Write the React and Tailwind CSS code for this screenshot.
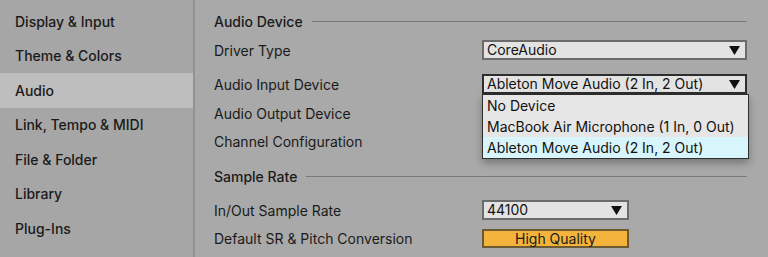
import React from "react";

const font = { fontFamily: "Inter, 'Noto Sans', sans-serif" };

const navItems = [
  "Display & Input",
  "Theme & Colors",
  "Audio",
  "Link, Tempo & MIDI",
  "File & Folder",
  "Library",
  "Plug-Ins",
];

function Arrow() {
  return (
    <svg width="11" height="9" viewBox="0 0 11 9" className="shrink-0">
      <polygon points="0,0 11,0 5.5,9" fill="#111" />
    </svg>
  );
}

function Select({ value, width, focused }) {
  return (
    <div
      className={
        "flex items-center justify-between h-[20px] pl-[3px] pr-[5px] bg-[#e3e3e3] text-[14px] text-[#111] border-2 " +
        (focused ? "border-[#2e2e2e]" : "border-[#6b6b6b]")
      }
      style={{ width }}
    >
      <span className="leading-none">{value}</span>
      <Arrow />
    </div>
  );
}

function Header({ title, h }) {
  return (
    <div className="flex items-center gap-[9px]" style={{ height: h }}>
      <span className="text-[14px] font-medium text-[#1a1a1a]">{title}</span>
      <div className="flex-1 h-px bg-[#7a7a7a]" />
    </div>
  );
}

function Row({ label, h, children }) {
  return (
    <div className="flex items-center" style={{ height: h }}>
      <span className="w-[268px] text-[14px] text-[#1a1a1a]">{label}</span>
      {children}
    </div>
  );
}

export default function App() {
  return (
    <div className="relative w-[768px] h-[257px] flex bg-[#a9a9a9] overflow-hidden" style={font}>
      <div className="w-[195px] h-full bg-[#a6a6a6] border-r-2 border-[#939393] pt-[4px]">
        {navItems.map((item) => (
          <div
            key={item}
            className={
              "h-[34.5px] flex items-center pl-[15px] text-[14px] text-[#1a1a1a] font-medium " +
              (item === "Audio" ? "bg-[#bebebe]" : "")
            }
          >
            {item}
          </div>
        ))}
      </div>

      <div className="flex-1 pl-[19px] pr-[21px] pt-[7px] flex flex-col">
        <Header title="Audio Device" h="28px" />
        <Row label="Driver Type" h="30px">
          <Select value="CoreAudio" width="265px" />
        </Row>
        <Row label="Audio Input Device" h="38px">
          <Select value="Ableton Move Audio (2 In, 2 Out)" width="265px" focused />
        </Row>
        <Row label="Audio Output Device" h="20px" />
        <Row label="Channel Configuration" h="36px" />
        <Header title="Sample Rate" h="34px" />
        <Row label="In/Out Sample Rate" h="34px">
          <Select value="44100" width="147px" />
        </Row>
        <Row label="Default SR & Pitch Conversion" h="22px">
          <div className="w-[147px] h-[19px] bg-[#f4b43c] border-2 border-[#6b5a32] flex items-center justify-center text-[14px] text-[#1a1a1a]">
            High Quality
          </div>
        </Row>
      </div>

      <div className="absolute left-[482px] top-[94px] w-[267px] bg-[#e6e6e6] border border-[#2e2e2e] shadow-[0_4px_8px_rgba(0,0,0,0.3)] text-[14px] text-[#111]">
        <div className="h-[21px] flex items-center pl-[4px]">No Device</div>
        <div className="h-[21px] flex items-center pl-[4px]">MacBook Air Microphone (1 In, 0 Out)</div>
        <div className="h-[21px] flex items-center pl-[4px] bg-[#d7f5fb]">Ableton Move Audio (2 In, 2 Out)</div>
      </div>
    </div>
  );
}
